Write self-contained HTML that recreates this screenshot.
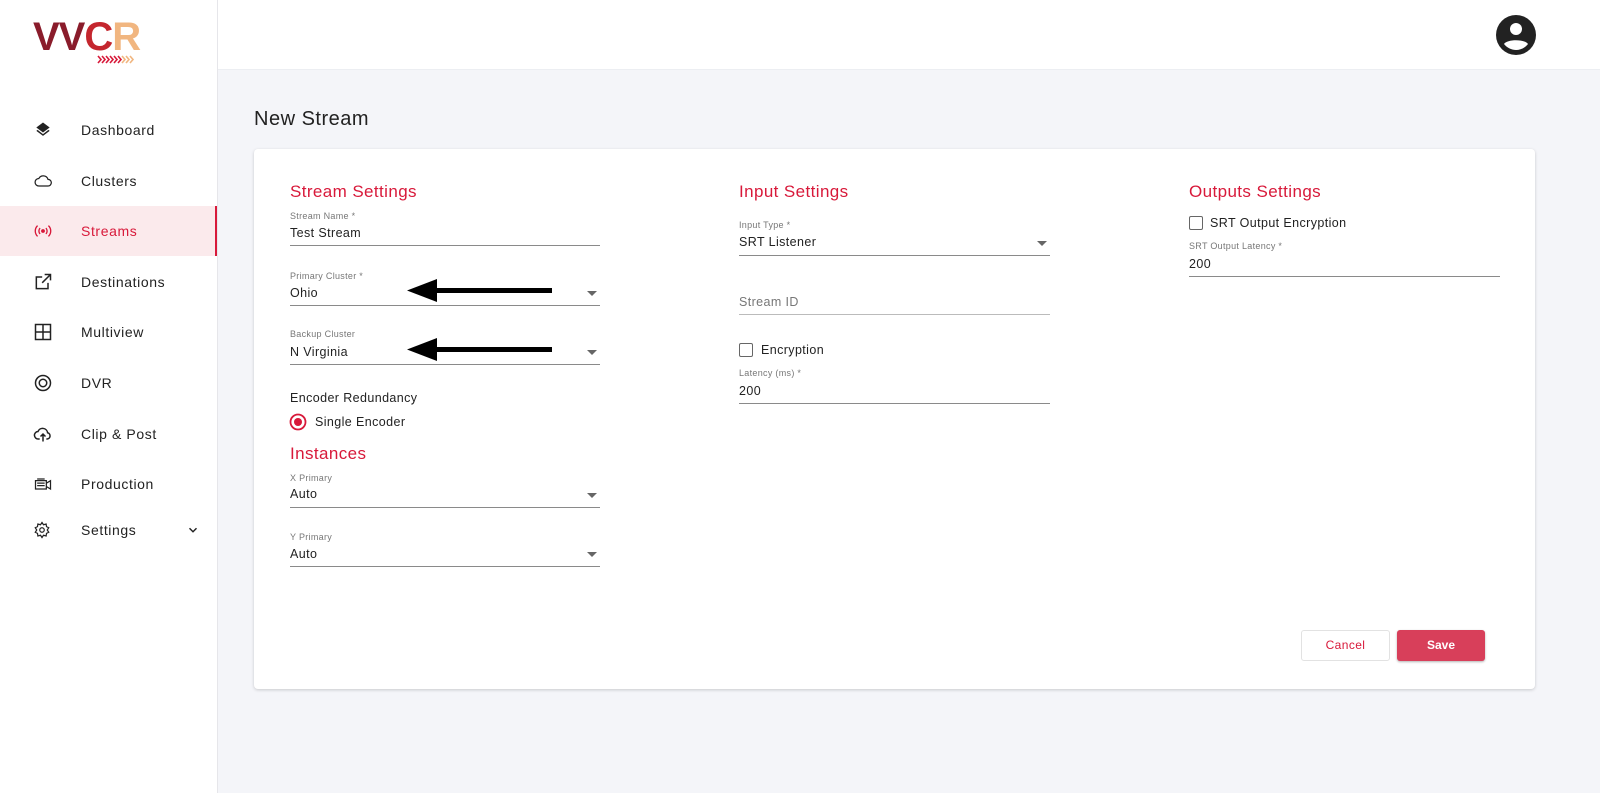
<!DOCTYPE html>
<html><head><meta charset="utf-8"><style>
*{box-sizing:border-box;margin:0;padding:0}
body{width:1600px;height:793px;position:relative;font-family:"Liberation Sans",sans-serif;background:#f4f5f9;overflow:hidden;color:#222}
.a{position:absolute}
#side{left:0;top:0;width:218px;height:793px;background:#fff;border-right:1px solid #e6e6ea}
#top{left:218px;top:0;width:1382px;height:70px;background:#fff;border-bottom:1px solid #eceef2}
.mi{position:absolute;left:0;width:217px;height:50px;font-size:14px;letter-spacing:.6px;color:#222}
.mi span{position:absolute;left:81px;top:50%;transform:translateY(-50%)}
.mi svg{position:absolute;left:33px;top:50%;transform:translateY(-50%)}
.card{left:254px;top:149px;width:1281px;height:540px;background:#fff;border-radius:4px;box-shadow:0 1px 3px rgba(0,0,0,.18)}
.h{font-size:17px;color:#d8193a;letter-spacing:.4px}
.lb{font-size:9px;color:#777;letter-spacing:.3px}
.v{font-size:12.5px;color:#222;letter-spacing:.4px}
.ln{height:1px;background:#8a8a8a}
.tri{width:0;height:0;border-left:5px solid transparent;border-right:5px solid transparent;border-top:5px solid #666}
.cb{width:14px;height:14px;border:1.5px solid #666;border-radius:2px}
</style></head><body>
<div id="side" class="a">
 <div class="a" style="left:33px;top:15px;font-size:40px;font-weight:bold;letter-spacing:-1px;line-height:44px"><span style="color:#8a1c2b">VV</span><span style="color:#c4262e">C</span><span style="color:#f1b680">R</span></div>
 <svg class="a" style="left:97px;top:55px" width="38" height="9" viewBox="0 0 38 9"><g fill="none" stroke-width="1.6"><path d="M1 1l3 3.5-3 3.5M5 1l3 3.5-3 3.5M9 1l3 3.5-3 3.5M13 1l3 3.5-3 3.5M17 1l3 3.5-3 3.5M21 1l3 3.5-3 3.5" stroke="#d8193a"/><path d="M25 1l3 3.5-3 3.5M29 1l3 3.5-3 3.5M33 1l3 3.5-3 3.5" stroke="#f1b680"/></g></svg>
 <div class="mi" style="top:105px"><svg width="20" height="20" viewBox="0 0 24 24"><path d="M12 3L4 9l8 6 8-6z M4 13l8 6 8-6-1.5-1.1L12 16.9 5.5 11.9z" fill="#222"/></svg><span>Dashboard</span></div>
 <div class="mi" style="top:156px"><svg width="20" height="20" viewBox="0 0 24 24"><path d="M7 18h11a4 4 0 0 0 0-8 6 6 0 0 0-11-1A4.5 4.5 0 0 0 7 18z" fill="none" stroke="#222" stroke-width="1.5"/></svg><span>Clusters</span></div>
 <div class="mi" style="top:206px;background:#fbeaec;border-right:2px solid #d8193a"><svg width="20" height="20" viewBox="0 0 24 24" fill="none" stroke="#d8193a" stroke-width="1.6"><circle cx="12" cy="12" r="1.5" fill="#d8193a"/><path d="M8.5 8.5a5 5 0 0 0 0 7M15.5 8.5a5 5 0 0 1 0 7M5.5 5.5a9 9 0 0 0 0 13M18.5 5.5a9 9 0 0 1 0 13"/></svg><span style="color:#d8193a">Streams</span></div>
 <div class="mi" style="top:257px"><svg width="20" height="20" viewBox="0 0 24 24" fill="none" stroke="#222" stroke-width="1.8"><path d="M18 13v7H4V6h7M14 3h7v7M21 3L11 13"/></svg><span>Destinations</span></div>
 <div class="mi" style="top:307px"><svg width="20" height="20" viewBox="0 0 24 24" fill="none" stroke="#222" stroke-width="1.8"><path d="M3 3h18v18H3zM12 3v18M3 12h18"/></svg><span>Multiview</span></div>
 <div class="mi" style="top:358px"><svg width="20" height="20" viewBox="0 0 24 24" fill="none" stroke="#222" stroke-width="1.8"><circle cx="12" cy="12" r="9"/><circle cx="12" cy="12" r="4.5"/></svg><span>DVR</span></div>
 <div class="mi" style="top:409px"><svg width="20" height="20" viewBox="0 0 24 24" fill="none" stroke="#222" stroke-width="1.8"><path d="M8 18H6.5a4.5 4.5 0 0 1-.5-9 6 6 0 0 1 11.5 1.5A3.8 3.8 0 0 1 17 18h-1M12 21v-9M9 15l3-3 3 3"/></svg><span>Clip &amp; Post</span></div>
 <div class="mi" style="top:459px"><svg width="20" height="20" viewBox="0 0 24 24" fill="none" stroke="#222" stroke-width="1.5"><path d="M3 8h13v10H3zM5 6h9M16 11l5-3v10l-5-3M5 11h9M5 14h9"/></svg><span>Production</span></div>
 <div class="mi" style="top:505px"><svg width="18" height="18" viewBox="0 0 24 24" fill="none" stroke="#222" stroke-width="1.6"><circle cx="12" cy="12" r="3"/><path d="M12 2l2 3 3.5-1 .5 3.5 3 1.5-2 3 2 3-3 1.5-.5 3.5-3.5-1-2 3-2-3-3.5 1-.5-3.5-3-1.5 2-3-2-3 3-1.5.5-3.5 3.5 1z"/></svg><span>Settings</span><svg style="left:186px" width="14" height="14" viewBox="0 0 24 24"><path d="M6 9l6 6 6-6" fill="none" stroke="#222" stroke-width="2.5"/></svg></div>
</div>
<div id="top" class="a"><svg class="a" style="left:1277px;top:14px" width="42" height="42" viewBox="0 0 42 42"><circle cx="21" cy="21" r="20" fill="#222"/><circle cx="21" cy="15" r="6" fill="#fff"/><path d="M9 30c3-5 21-5 24 0-3 4-8 6-12 6s-9-2-12-6z" fill="#fff"/></svg></div>
<div class="a" style="left:254px;top:108px;font-size:20px;letter-spacing:.5px;color:#222">New Stream</div>
<div class="a card"></div>
<div class="a h" style="left:290px;top:182px">Stream Settings</div>
<div class="a lb" style="left:290px;top:211px">Stream Name *</div>
<div class="a v" style="left:290px;top:226px">Test Stream</div>
<div class="a ln" style="left:290px;top:245px;width:310px"></div>
<div class="a lb" style="left:290px;top:271px">Primary Cluster *</div>
<div class="a v" style="left:290px;top:286px">Ohio</div>
<div class="a tri" style="left:587px;top:291px"></div>
<div class="a ln" style="left:290px;top:305px;width:310px"></div>
<div class="a lb" style="left:290px;top:329px">Backup Cluster</div>
<div class="a v" style="left:290px;top:345px">N Virginia</div>
<div class="a tri" style="left:587px;top:350px"></div>
<div class="a ln" style="left:290px;top:364px;width:310px"></div>
<svg class="a" style="left:405px;top:277px" width="150" height="90"><rect x="30" y="11" width="117" height="5" fill="#000"/><path d="M2 13.5L32 2v23z" fill="#000"/><rect x="30" y="70" width="117" height="5" fill="#000"/><path d="M2 72.5L32 61v23z" fill="#000"/></svg>
<div class="a" style="left:290px;top:391px;font-size:12.5px;letter-spacing:.4px">Encoder Redundancy</div>
<svg class="a" style="left:289px;top:413px" width="18" height="18"><circle cx="9" cy="9" r="7.5" fill="none" stroke="#d8193a" stroke-width="1.8"/><circle cx="9" cy="9" r="4" fill="#d8193a"/></svg>
<div class="a" style="left:315px;top:415px;font-size:12.5px;letter-spacing:.4px">Single Encoder</div>
<div class="a h" style="left:290px;top:444px">Instances</div>
<div class="a lb" style="left:290px;top:473px">X Primary</div>
<div class="a v" style="left:290px;top:487px">Auto</div>
<div class="a tri" style="left:587px;top:493px"></div>
<div class="a ln" style="left:290px;top:507px;width:310px"></div>
<div class="a lb" style="left:290px;top:532px">Y Primary</div>
<div class="a v" style="left:290px;top:547px">Auto</div>
<div class="a tri" style="left:587px;top:552px"></div>
<div class="a ln" style="left:290px;top:566px;width:310px"></div>
<div class="a h" style="left:739px;top:182px">Input Settings</div>
<div class="a lb" style="left:739px;top:220px">Input Type *</div>
<div class="a v" style="left:739px;top:235px">SRT Listener</div>
<div class="a tri" style="left:1037px;top:241px"></div>
<div class="a ln" style="left:739px;top:255px;width:311px"></div>
<div class="a" style="left:739px;top:295px;font-size:12.5px;color:#777;letter-spacing:.4px">Stream ID</div>
<div class="a" style="left:739px;top:314px;width:311px;height:1px;background:#bbb"></div>
<div class="a cb" style="left:739px;top:343px"></div>
<div class="a" style="left:761px;top:343px;font-size:12.5px;letter-spacing:.4px">Encryption</div>
<div class="a lb" style="left:739px;top:368px">Latency (ms) *</div>
<div class="a v" style="left:739px;top:384px">200</div>
<div class="a ln" style="left:739px;top:403px;width:311px"></div>
<div class="a h" style="left:1189px;top:182px">Outputs Settings</div>
<div class="a cb" style="left:1189px;top:216px"></div>
<div class="a" style="left:1210px;top:216px;font-size:12.5px;letter-spacing:.4px">SRT Output Encryption</div>
<div class="a lb" style="left:1189px;top:241px">SRT Output Latency *</div>
<div class="a v" style="left:1189px;top:257px">200</div>
<div class="a ln" style="left:1189px;top:276px;width:311px"></div>
<div class="a" style="left:1301px;top:630px;width:89px;height:31px;border:1px solid #e2e2e2;border-radius:3px;color:#d8193a;font-size:12px;text-align:center;line-height:29px;letter-spacing:.4px">Cancel</div>
<div class="a" style="left:1397px;top:630px;width:88px;height:31px;background:#d83f5a;border-radius:3px;color:#fff;font-size:12px;font-weight:bold;text-align:center;line-height:31px;box-shadow:0 1px 2px rgba(0,0,0,.3)">Save</div>
</body></html>
